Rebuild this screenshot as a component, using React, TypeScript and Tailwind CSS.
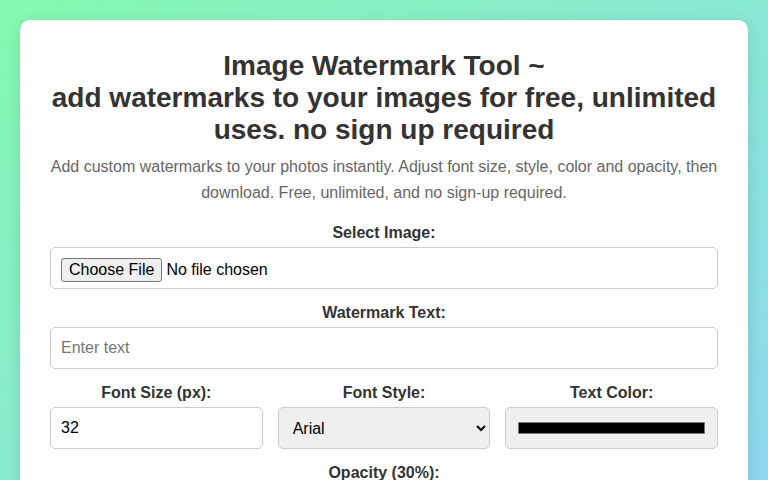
import { useState } from "react";

export default function App() {
  const [opacity] = useState(30);
  const inputCls =
    "w-full h-[42px] px-[10px] border border-[#ccc] rounded-[5px] text-base text-black bg-white outline-none";
  const labelCls = "block font-bold text-base leading-[18px] mb-[5px] text-[#333]";
  return (
    <div className="min-h-screen bg-gradient-to-br from-[#84fab0] to-[#8fd3f4] p-5 font-['Liberation_Sans',Arial,sans-serif]">
      <div className="bg-white rounded-[10px] shadow-[0_4px_15px_rgba(0,0,0,0.12)] px-[30px] pt-[30px] pb-10 text-center">
        <h1 className="text-[28px] leading-8 font-bold text-[#333]">
          Image Watermark Tool ~
          <br />
          add watermarks to your images for free, unlimited uses. no sign up required
        </h1>
        <p className="mt-2 text-base leading-[1.6] text-[#666]">
          Add custom watermarks to your photos instantly. Adjust font size, style, color and opacity, then
          download. Free, unlimited, and no sign-up required.
        </p>

        <div className="mt-[19px]">
          <label className={labelCls}>Select Image:</label>
          <div className="w-full h-[42px] px-[10px] pt-[10px] border border-[#ccc] rounded-[5px] flex items-start text-left">
            <input
              type="file"
              accept="image/*"
              className="text-base leading-[24px] text-black file:bg-[#efefef] file:border file:border-solid file:border-[#767676] file:rounded-[3px] file:px-[7px] file:py-[2px] file:mr-[4px] file:text-black file:leading-[18px]"
            />
          </div>
        </div>

        <div className="mt-[15px]">
          <label className={labelCls}>Watermark Text:</label>
          <input type="text" placeholder="Enter text" className={`${inputCls} placeholder:text-[#757575]`} />
        </div>

        <div className="mt-[15px] grid grid-cols-3 gap-[15px]">
          <div>
            <label className={labelCls}>Font Size (px):</label>
            <input type="number" defaultValue={32} className={inputCls} />
          </div>
          <div>
            <label className={labelCls}>Font Style:</label>
            <select defaultValue="Arial" className="w-full h-[42px] px-[10px] border border-[#ccc] rounded-[5px] text-base text-black bg-[#efefef] outline-none">
              <option>Arial</option>
              <option>Times New Roman</option>
              <option>Courier New</option>
              <option>Verdana</option>
            </select>
          </div>
          <div>
            <label className={labelCls}>Text Color:</label>
            <input type="color" defaultValue="#000000" className="w-full h-[42px] p-[10px] border border-[#ccc] rounded-[5px] bg-[#efefef]" />
          </div>
        </div>

        <div className="mt-[15px]">
          <label className={labelCls}>Opacity ({opacity}%):</label>
          <input type="range" min={0} max={100} defaultValue={opacity} className="w-full" />
        </div>
      </div>
    </div>
  );
}
